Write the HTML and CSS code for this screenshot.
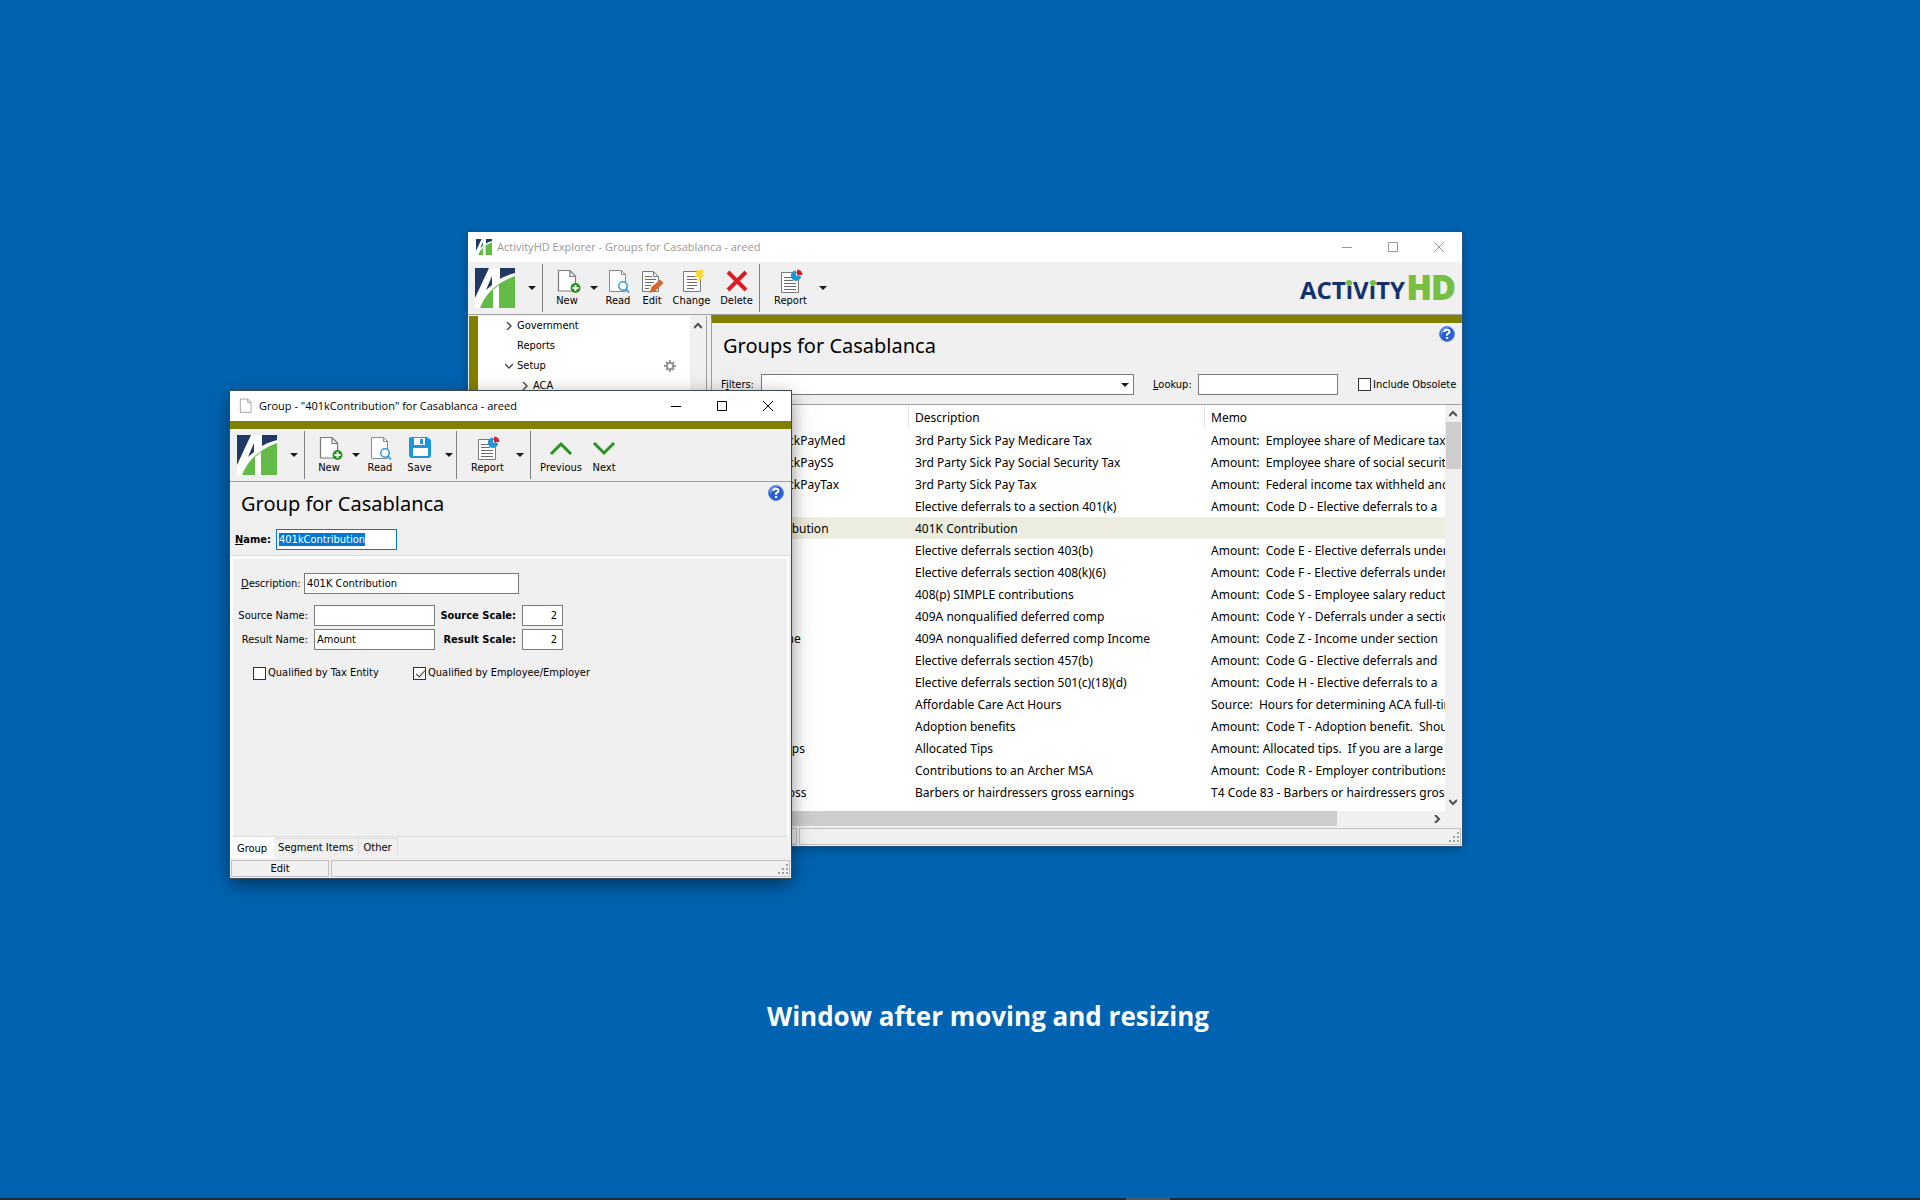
FILE: index.html
```html
<!DOCTYPE html>
<html lang="en">
<head>
  <meta charset="UTF-8">
  <meta name="viewport" content="width=device-width, initial-scale=1.0">
  <title>ActivityHD Explorer</title>
  <link rel="stylesheet" href="styles.css">
</head>
<body>
  <!-- Shared icons -->
  <svg class="sprite" aria-hidden="true">
    <symbol id="logo" viewBox="0 0 40 40">
      <clipPath id="logo-clip"><rect width="40" height="40" rx="4"/></clipPath>
      <g clip-path="url(#logo-clip)">
        <rect width="40" height="40" fill="#fff"/>
        <path d="M0 0H14L0 30Z" fill="#1f3864"/>
        <path d="M25 0H40V5Q32 7 25 11Z" fill="#1f3864"/>
        <path d="M17 8V17L11 22Z" fill="#1f3864"/>
        <path d="M5 40Q13 18 40 8V40Z" fill="#62bb46"/>
        <path d="M18 40V22L24 17V40Z" fill="#fff"/>
      </g>
    </symbol>
    <symbol id="doc" viewBox="0 0 24 24">
      <path d="M3.500 1.500h11l5 5v15h-16z M14.500 1.500v5h5" fill="#fff" stroke="#7b7b7b"/>
    </symbol>
    <symbol id="new" viewBox="0 0 24 24">
      <path d="M2 1.500h11l5.500 5.500v15h-17v-20.500z M13 1.500v6h5.500" fill="#fff" stroke="#7b7b7b" stroke-width="1.200"/>
      <circle cx="18.500" cy="19" r="5" fill="#26941f"/>
      <path d="M18.500 16v6M15.500 19h6" stroke="#fff" stroke-width="1.800"/>
    </symbol>
    <symbol id="read" viewBox="0 0 24 24">
      <path d="M3.500 1.500h12l4 4v17h-16z M15.500 1.500v4h4" fill="#fff" stroke="#8a8a8a"/>
      <circle cx="17" cy="17" r="4.200" fill="#fff" stroke="#2a9be0" stroke-width="1.500"/>
      <path d="M20 20l3 3.500" stroke="#2a9be0" stroke-width="1.800"/>
    </symbol>
    <symbol id="edit" viewBox="0 0 24 24">
      <path d="M2.500 2.500h11l5 5v15h-16z M13.500 2.500v5h5" fill="#fff" stroke="#7b7b7b"/>
      <path d="M5 7.500h7M5 10.500h11M5 13.500h9M5 16.500h6M5 19.500h4" stroke="#6b6b6b"/>
      <path d="M9.500 24l2-6 8.500-7.500 3.500 3.500-8 8z" fill="#d2692b"/>
    </symbol>
    <symbol id="change" viewBox="0 0 24 24">
      <path d="M3.500 2.500h17v20h-17z" fill="#fff" stroke="#7b7b7b"/>
      <path d="M7 7.500h8M7 10.500h10M7 13.500h10M7 16.500h10M7 19.500h7" stroke="#6b6b6b"/>
      <path d="M17 1h7l-2 5h3l-8 8 2-6h-4z" fill="#fdd835"/>
    </symbol>
    <symbol id="delete" viewBox="0 0 24 24">
      <path d="M3 3l18 18M21 3L3 21" stroke="#d81f27" stroke-width="4"/>
    </symbol>
    <symbol id="report" viewBox="0 0 24 24">
      <path d="M2.500 3.500h17v20h-17z" fill="#fff" stroke="#7b7b7b"/>
      <path d="M5 8.500h8M5 11.500h9M5 14.500h12M5 17.500h12M5 20.500h12" stroke="#6b6b6b"/>
      <path d="M17 6.500V1.500a5.200 5.200 0 1 0 5.200 5.500z" fill="#2196d6"/>
      <path d="M18 .500a6 6 0 0 1 5.500 5.500H18z" fill="#d81f27"/>
    </symbol>
    <symbol id="save" viewBox="0 0 24 24">
      <path d="M3 1h16l4 3v15a3 3 0 0 1-3 3H4a3 3 0 0 1-3-3V3a2 2 0 0 1 2-2z" fill="#1e96dc"/>
      <path d="M6 2h11v7H6zM5 12h15v8H5z" fill="#fff"/>
      <path d="M12 3h3v5h-3z" fill="#1e96dc"/>
    </symbol>
    <symbol id="up" viewBox="0 0 24 24">
      <path d="M2 18L12 8l10 10" fill="none" stroke="#26941f" stroke-width="3"/>
    </symbol>
    <symbol id="down" viewBox="0 0 24 24">
      <path d="M2 7l10 10L22 7" fill="none" stroke="#26941f" stroke-width="3"/>
    </symbol>
    <symbol id="caret" viewBox="0 0 8 4">
      <path d="M0 0h8L4 4z" fill="#1a1a1a"/>
    </symbol>
    <symbol id="chevron" viewBox="0 0 8 8">
      <path d="M2 0l4 4-4 4" fill="none" stroke="currentColor"/>
    </symbol>
    <symbol id="gear" viewBox="0 0 12 12">
      <circle cx="6" cy="6" r="3.200" fill="none" stroke="#949494" stroke-width="2"/>
      <path d="M6 0v2.500M6 9.500V12M0 6h2.500M9.500 6H12M2 2l1.500 1.500M8.500 8.500L10 10M2 10l1.500-1.500M8.500 3.500L10 2" stroke="#949494" stroke-width="1.800"/>
    </symbol>
    <symbol id="help" viewBox="0 0 16 16">
      <circle cx="8" cy="8" r="7.500" fill="#2a5fd0" stroke="#5a8fe0"/>
      <path d="M2 6a6.500 6.500 0 0 1 8-4.500Q4 4 2 10z" fill="#6f9fee"/>
      <path d="M5.500 6Q5.500 3.700 8 3.700T10.500 6Q10.500 7.200 8.100 8.200V9.800" fill="none" stroke="#fff" stroke-width="1.900"/>
      <path d="M7 11h2.200v2H7z" fill="#fff"/>
    </symbol>
    <symbol id="minimize" viewBox="0 0 12 12"><path d="M1 6.500h10" stroke="currentColor"/></symbol>
    <symbol id="maximize" viewBox="0 0 12 12"><path d="M1.500 1.500h9v9h-9z" fill="none" stroke="currentColor"/></symbol>
    <symbol id="close" viewBox="0 0 12 12"><path d="M1 1l10 10M11 1L1 11" stroke="currentColor"/></symbol>
    <symbol id="grip" viewBox="0 0 10 10">
      <path d="M8 0h2v2H8zM4 4h2v2H4zM8 4h2v2H8zM0 8h2v2H0zM4 8h2v2H4zM8 8h2v2H8z" fill="#a0a0a0"/>
    </symbol>
  </svg>

  <main class="desktop">
    <!-- Explorer window -->
    <section class="window explorer">
      <header class="titlebar">
        <svg class="title-icon"><use href="#logo"/></svg>
        <span class="title-text">ActivityHD Explorer - Groups for Casablanca - areed</span>
        <button class="title-button" aria-label="Minimize"><svg><use href="#minimize"/></svg></button>
        <button class="title-button" aria-label="Maximize"><svg><use href="#maximize"/></svg></button>
        <button class="title-button" aria-label="Close"><svg><use href="#close"/></svg></button>
      </header>

      <div class="toolbar">
        <button class="logo-button" aria-label="ActivityHD"><svg><use href="#logo"/></svg></button>
        <button class="drop logo-drop" aria-label="ActivityHD menu"><svg><use href="#caret"/></svg></button>
        <span class="separator"></span>
        <button class="tool new"><svg><use href="#new"/></svg>New</button>
        <button class="drop" aria-label="New options"><svg><use href="#caret"/></svg></button>
        <button class="tool narrow"><svg><use href="#read"/></svg>Read</button>
        <button class="tool narrow"><svg><use href="#edit"/></svg>Edit</button>
        <button class="tool"><svg><use href="#change"/></svg>Change</button>
        <button class="tool"><svg><use href="#delete"/></svg>Delete</button>
        <span class="separator"></span>
        <button class="tool report"><svg><use href="#report"/></svg>Report</button>
        <button class="drop report-drop" aria-label="Report options"><svg><use href="#caret"/></svg></button>
        <svg class="brand" viewBox="0 0 160 36" role="img" aria-label="ActivityHD">
          <text x="2" y="29" class="brand-name">ACTiViTY</text>
          <text x="109" y="29" class="brand-hd">HD</text>
          <circle cx="51" cy="13" r="3"/>
          <circle cx="75" cy="13" r="3"/>
        </svg>
      </div>

      <div class="explorer-body">
        <nav class="tree-pane">
          <ul class="tree">
            <li><svg><use href="#chevron"/></svg>Government</li>
            <li class="leaf">Reports</li>
            <li class="open"><svg><use href="#chevron"/></svg>Setup
              <button class="gear" aria-label="Setup options"><svg><use href="#gear"/></svg></button></li>
            <li class="child"><svg><use href="#chevron"/></svg>ACA</li>
          </ul>
          <div class="tree-scroll"><svg class="arrow-up"><use href="#chevron"/></svg></div>
        </nav>

        <div class="list-pane">
          <div class="list-head">
            <h1>Groups for Casablanca</h1>
            <button class="help" aria-label="Help"><svg><use href="#help"/></svg></button>
          </div>
          <div class="filters">
            <label for="filters">F<u>i</u>lters:</label>
            <span class="combo">
              <select id="filters"><option></option></select>
              <svg><use href="#caret"/></svg>
            </span>
            <label for="lookup" class="lookup-label"><u>L</u>ookup:</label>
            <input type="text" id="lookup">
            <label class="check obsolete"><input type="checkbox">Include Obsolete</label>
          </div>

          <div class="list">
            <div class="list-view">
              <table>
                <colgroup><col class="col-name"><col class="col-desc"><col></colgroup>
                <thead>
                  <tr><th></th><th>Description</th><th>Memo</th></tr>
                </thead>
                <tbody>
                  <tr><td>3rdPartySickPayMed</td><td>3rd Party Sick Pay Medicare Tax</td><td>Amount:  Employee share of Medicare tax</td></tr>
                  <tr><td>3rdPartySickPaySS</td><td>3rd Party Sick Pay Social Security Tax</td><td>Amount:  Employee share of social security</td></tr>
                  <tr><td>3rdPartySickPayTax</td><td>3rd Party Sick Pay Tax</td><td>Amount:  Federal income tax withheld and</td></tr>
                  <tr><td></td><td>Elective deferrals to a section 401(k)</td><td>Amount:  Code D - Elective deferrals to a</td></tr>
                  <tr class="selected"><td>401kContribution</td><td>401K Contribution</td><td></td></tr>
                  <tr><td></td><td>Elective deferrals section 403(b)</td><td>Amount:  Code E - Elective deferrals under</td></tr>
                  <tr><td></td><td>Elective deferrals section 408(k)(6)</td><td>Amount:  Code F - Elective deferrals under</td></tr>
                  <tr><td></td><td>408(p) SIMPLE contributions</td><td>Amount:  Code S - Employee salary reduction</td></tr>
                  <tr><td></td><td>409A nonqualified deferred comp</td><td>Amount:  Code Y - Deferrals under a section</td></tr>
                  <tr><td>409AIncome</td><td>409A nonqualified deferred comp Income</td><td>Amount:  Code Z - Income under section</td></tr>
                  <tr><td></td><td>Elective deferrals section 457(b)</td><td>Amount:  Code G - Elective deferrals and</td></tr>
                  <tr><td></td><td>Elective deferrals section 501(c)(18)(d)</td><td>Amount:  Code H - Elective deferrals to a</td></tr>
                  <tr><td></td><td>Affordable Care Act Hours</td><td>Source:  Hours for determining ACA full-time</td></tr>
                  <tr><td></td><td>Adoption benefits</td><td>Amount:  Code T - Adoption benefit.  Should</td></tr>
                  <tr><td>AllocatedTips</td><td>Allocated Tips</td><td>Amount: Allocated tips.  If you are a large</td></tr>
                  <tr><td></td><td>Contributions to an Archer MSA</td><td>Amount:  Code R - Employer contributions</td></tr>
                  <tr><td>BarbersGross</td><td>Barbers or hairdressers gross earnings</td><td>T4 Code 83 - Barbers or hairdressers gross</td></tr>
                </tbody>
              </table>
            </div>
            <div class="vscroll">
              <svg class="arrow-up"><use href="#chevron"/></svg>
              <span class="vthumb"></span>
              <svg class="arrow-down"><use href="#chevron"/></svg>
            </div>
          </div>
          <div class="hscroll">
            <span class="hthumb"></span>
            <svg><use href="#chevron"/></svg>
          </div>
        </div>
      </div>

      <footer class="statusbar">
        <span class="status-mode"></span>
        <span class="status-text"><svg><use href="#grip"/></svg></span>
      </footer>
    </section>

    <!-- Group window -->
    <section class="window group">
      <header class="titlebar">
        <svg class="title-icon"><use href="#doc"/></svg>
        <span class="title-text">Group - "401kContribution" for Casablanca - areed</span>
        <button class="title-button" aria-label="Minimize"><svg><use href="#minimize"/></svg></button>
        <button class="title-button" aria-label="Maximize"><svg><use href="#maximize"/></svg></button>
        <button class="title-button" aria-label="Close"><svg><use href="#close"/></svg></button>
      </header>

      <div class="toolbar">
        <button class="logo-button" aria-label="ActivityHD"><svg><use href="#logo"/></svg></button>
        <button class="drop logo-drop" aria-label="ActivityHD menu"><svg><use href="#caret"/></svg></button>
        <span class="separator"></span>
        <button class="tool new"><svg><use href="#new"/></svg>New</button>
        <button class="drop" aria-label="New options"><svg><use href="#caret"/></svg></button>
        <button class="tool narrow"><svg><use href="#read"/></svg>Read</button>
        <button class="tool"><svg><use href="#save"/></svg>Save</button>
        <button class="drop" aria-label="Save options"><svg><use href="#caret"/></svg></button>
        <span class="separator"></span>
        <button class="tool report"><svg><use href="#report"/></svg>Report</button>
        <button class="drop report-drop" aria-label="Report options"><svg><use href="#caret"/></svg></button>
        <span class="separator"></span>
        <button class="tool previous"><svg><use href="#up"/></svg>Previous</button>
        <button class="tool narrow"><svg><use href="#down"/></svg>Next</button>
      </div>

      <div class="group-head">
        <h1>Group for Casablanca</h1>
        <button class="help" aria-label="Help"><svg><use href="#help"/></svg></button>
      </div>
      <div class="name-row">
        <label for="name"><u>N</u>ame:</label>
        <input type="text" id="name" value="401kContribution">
      </div>

      <form class="tab-page">
        <div class="field-row">
          <label for="description"><u>D</u>escription:</label>
          <input type="text" id="description" class="wide" value="401K Contribution">
        </div>
        <div class="field-grid">
          <label for="source-name">Source Name:</label>
          <input type="text" id="source-name">
          <label for="source-scale" class="bold">Source Scale:</label>
          <input type="text" id="source-scale" class="scale" value="2">
          <label for="result-name">Result Name:</label>
          <input type="text" id="result-name" value="Amount">
          <label for="result-scale" class="bold">Result Scale:</label>
          <input type="text" id="result-scale" class="scale" value="2">
        </div>
        <div class="check-row">
          <label class="check"><input type="checkbox">Qualified by Tax Entity</label>
          <label class="check"><input type="checkbox" checked>Qualified by Employee/Employer</label>
        </div>
      </form>

      <div class="tabs">
        <button class="tab active">Group</button>
        <button class="tab">Segment Items</button>
        <button class="tab">Other</button>
      </div>
      <footer class="statusbar">
        <span class="status-mode">Edit</span>
        <span class="status-text"><svg><use href="#grip"/></svg></span>
      </footer>
    </section>

    <p class="caption">Window after moving and resizing</p>
    <div class="taskbar"><span></span></div>
  </main>

  <script>
    // Start with the group name selected, ready to be replaced
    const nameInput = document.getElementById('name');
    nameInput.focus();
    nameInput.select();
  </script>
</body>
</html>
```
FILE: styles.css
```css
* {
  box-sizing: border-box;
}

body {
  margin: 0;
  font-family: "DejaVu Sans Condensed", "Noto Sans", sans-serif;
  font-size: 11px;
  line-height: 16px;
  color: #000;
}

.sprite {
  display: none;
}

button,
input,
select {
  font: inherit;
  color: inherit;
  margin: 0;
}

button {
  background: none;
  border: none;
  padding: 0;
}

svg {
  display: block;
  flex-shrink: 0;
}

h1 {
  margin: 0;
  font-family: "Noto Sans", sans-serif;
  font-size: 20px;
  font-weight: normal;
  line-height: 28px;
}

.desktop {
  position: relative;
  min-height: 100vh;
  background: #0063b1;
  overflow: hidden;
}

.window {
  position: absolute;
  display: flex;
  flex-direction: column;
  background: #f0f0f0;
}

.explorer {
  left: 468px;
  top: 232px;
  width: 994px;
  height: 614px;
  box-shadow: 0 0 0 1px #1d5687, 0 2px 10px rgba(0, 0, 0, 0.35);
}

.group {
  left: 230px;
  top: 391px;
  width: 561px;
  height: 487px;
  box-shadow: 0 0 0 1px #3c4a56, 0 6px 18px rgba(0, 0, 0, 0.5);
}

/* Title bars */
.titlebar {
  display: flex;
  align-items: center;
  height: 30px;
  flex-shrink: 0;
  padding-left: 8px;
  background: #fff;
  font-family: "Open Sans", sans-serif;
  font-size: 11px;
}

.explorer .titlebar {
  color: #999;
}

.title-icon {
  width: 16px;
  height: 16px;
}

.title-text {
  flex: 1;
  margin-left: 5px;
  white-space: nowrap;
}

.title-button {
  display: flex;
  justify-content: center;
  width: 46px;
}

.title-button svg {
  width: 12px;
  height: 12px;
}

/* Toolbars */
.toolbar {
  display: flex;
  align-items: flex-start;
  flex-shrink: 0;
  height: 53px;
  padding: 2px 4px 0 7px;
  border-bottom: 1px solid #a0a0a0;
}

.group .toolbar {
  height: 61px;
  border-top: 8px solid #808000;
}

.logo-button {
  margin-top: 4px;
}

.logo-button svg {
  width: 40px;
  height: 40px;
}

.separator {
  width: 1px;
  height: 48px;
  margin-right: 4px;
  background: #808080;
}

.tool {
  display: flex;
  flex-direction: column;
  align-items: center;
  width: 45px;
  padding-top: 5px;
  white-space: nowrap;
}

.tool svg {
  width: 24px;
  height: 24px;
}

.tool.new {
  width: 40px;
}

.tool.new svg {
  margin-left: 4px;
}

.tool.narrow {
  width: 34px;
}

.tool.report {
  margin-left: 4px;
}

.tool.previous {
  width: 52px;
}

.drop {
  display: flex;
  justify-content: center;
  width: 14px;
  padding-top: 22px;
}

.drop svg {
  width: 8px;
  height: 4px;
}

.logo-drop {
  width: 27px;
  padding-left: 7px;
}

.report-drop {
  width: 20px;
}

.brand {
  width: 160px;
  height: 36px;
  margin: 6px 0 0 auto;
  fill: #78be43;
  font-family: "Open Sans", sans-serif;
  font-weight: bold;
  overflow: visible;
}

.brand-name {
  font-size: 24px;
  fill: #13316b;
}

.brand-hd {
  font-size: 32px;
  stroke: #78be43;
  stroke-width: 2;
}

/* Explorer tree */
.explorer-body {
  display: flex;
  flex: 1;
  min-height: 0;
}

.tree-pane {
  display: flex;
  width: 238px;
  margin: 1px 4px 0 1px;
  border-left: 9px solid #808000;
  border-right: 1px solid #a0a0a0;
  background: #fff;
}

.tree {
  flex: 1;
  margin: 0;
  padding: 0;
  list-style: none;
}

.tree li {
  display: flex;
  align-items: center;
  gap: 4px;
  height: 20px;
  padding-left: 27px;
}

.tree svg {
  width: 8px;
  height: 8px;
  color: #444;
  stroke-width: 1.4;
}

.tree .leaf {
  padding-left: 39px;
}

.tree .child {
  padding-left: 43px;
}

.open > svg {
  transform: rotate(90deg);
}

.tree .gear {
  margin: 0 14px 0 auto;
}

.tree .gear svg {
  width: 12px;
  height: 12px;
}

.tree-scroll {
  width: 16px;
  padding-top: 6px;
  background: #f0f0f0;
}

.tree-scroll svg {
  margin: 0 auto;
}

.arrow-up,
.arrow-down,
.hscroll svg {
  width: 8px;
  height: 8px;
  color: #505050;
  stroke-width: 2;
}

.arrow-up {
  transform: rotate(-90deg);
}

.arrow-down {
  transform: rotate(90deg);
}

/* Explorer list */
.list-pane {
  display: flex;
  flex-direction: column;
  flex: 1;
  min-width: 0;
  border-top: 8px solid #808000;
  border-left: 1px solid #a0a0a0;
}

.list-head,
.group-head {
  display: flex;
  justify-content: space-between;
  padding: 3px 7px 0 11px;
}

.list-head h1 {
  margin-top: 6px;
}

.group-head h1 {
  margin-top: 5px;
}

.help {
  align-self: flex-start;
}

.help svg {
  width: 16px;
  height: 16px;
}

.filters {
  display: flex;
  align-items: center;
  margin-top: 14px;
  padding: 0 7px 9px 9px;
}

.filters label {
  width: 40px;
  white-space: nowrap;
}

input[type="text"],
select {
  height: 21px;
  padding: 0 2px;
  border: 1px solid #7a7a7a;
  border-radius: 0;
  background: #fff;
  outline: none;
}

.combo {
  position: relative;
  flex: 1;
}

.combo select {
  display: block;
  width: 100%;
  appearance: none;
}

.combo svg {
  position: absolute;
  right: 5px;
  top: 9px;
  width: 8px;
  height: 4px;
}

.filters .lookup-label {
  width: 45px;
  margin-left: 19px;
}

#lookup {
  width: 140px;
  margin-right: 20px;
}

.check {
  display: flex;
  align-items: center;
  gap: 2px;
  white-space: nowrap;
}

.filters .obsolete {
  width: 97px;
}

.check input {
  appearance: none;
  width: 13px;
  height: 13px;
  flex-shrink: 0;
  border: 1px solid #333;
  background: #fff;
}

.check input:checked::after {
  content: "";
  display: block;
  width: 4px;
  height: 8px;
  margin: 0 0 0 4px;
  border: solid #333;
  border-width: 0 1px 1px 0;
  transform: rotate(42deg);
}

.list {
  display: flex;
  flex: 1;
  min-height: 0;
  border-top: 1px solid #a0a0a0;
}

.list-view {
  flex: 1;
  overflow: hidden;
  background: #fff;
}

table {
  width: 100%;
  table-layout: fixed;
  border-collapse: separate;
  border-spacing: 0;
  font-family: "Noto Sans", sans-serif;
  font-size: 12px;
}

.col-name {
  width: 197px;
}

.col-desc {
  width: 296px;
}

th,
td {
  height: 22px;
  padding: 1px 0 0 6px;
  overflow: hidden;
  text-align: left;
  font-weight: normal;
  white-space: pre;
}

td:first-child {
  padding-left: 18px;
}

th {
  height: 24px;
  border-right: 1px solid #e5e5e5;
}

th:last-child {
  border-right: none;
}

.selected {
  background: #ecedde;
}

.vscroll {
  display: flex;
  flex-direction: column;
  align-items: center;
  width: 17px;
  padding: 5px 1px 5px 0;
}

.vthumb {
  width: 15px;
  height: 47px;
  margin: 4px 0 auto;
  background: #cdcdcd;
}

.hscroll {
  display: flex;
  align-items: center;
  height: 15px;
  padding-right: 21px;
}

.hthumb {
  width: 625px;
  height: 15px;
  margin-right: auto;
  background: #cdcdcd;
}

/* Status bars */
.statusbar {
  display: flex;
  gap: 2px;
  flex-shrink: 0;
  padding: 2px 1px 1px;
}

.statusbar span {
  height: 17px;
  border: 1px solid #c0c0c0;
  line-height: 15px;
  text-align: center;
}

.status-mode {
  width: 98px;
}

.explorer .status-mode {
  width: 328px;
}

.status-text {
  display: flex;
  justify-content: flex-end;
  align-items: flex-end;
  flex: 1;
  padding: 0 1px 2px;
}

.status-text svg {
  width: 10px;
  height: 10px;
}

/* Group form */
.name-row {
  display: flex;
  align-items: center;
  gap: 5px;
  padding: 11px 5px 6px;
}

.name-row label {
  width: 36px;
  font-weight: bold;
  white-space: nowrap;
}

#name {
  width: 121px;
  border-color: #0078d7;
}

#name::selection {
  background: #0078d7;
  color: #fff;
}

.tab-page {
  flex: 1;
  margin-right: 2px;
  padding: 14px 8px;
  border: solid #fff;
  border-width: 3px 2px 0 3px;
  box-shadow: inset 0 -1px #dcdcdc, 0 -1px #dcdcdc;
}

.field-row {
  display: flex;
  align-items: center;
}

.field-row label {
  width: 63px;
}

.field-row .wide {
  width: 215px;
}

.field-grid {
  display: grid;
  grid-template-columns: 67px 121px 75px 41px;
  column-gap: 6px;
  row-gap: 3px;
  align-items: center;
  margin-top: 11px;
  text-align: right;
  white-space: nowrap;
}

.field-grid label {
  justify-self: end;
}

.field-grid input {
  text-align: left;
}

.field-grid .bold {
  font-weight: bold;
}

.field-grid .scale {
  padding-right: 5px;
  text-align: right;
}

.check-row {
  display: grid;
  grid-template-columns: 160px 1fr;
  margin-top: 15px;
  padding-left: 12px;
}

.tabs {
  display: flex;
  align-items: flex-start;
  height: 21px;
  flex-shrink: 0;
}

.tab {
  height: 18px;
  margin-top: 1px;
  padding: 0 5px 0 4px;
  border: solid #dcdcdc;
  border-width: 1px 1px 0 0;
}

.tab.active {
  height: 21px;
  margin-top: 0;
  padding: 3px 7px 0;
  border-width: 0;
  background: #fff;
}

/* Caption and taskbar */
.caption {
  position: absolute;
  left: 767px;
  top: 998px;
  margin: 0;
  color: #fff;
  font-family: "Open Sans", sans-serif;
  font-size: 26px;
  font-weight: bold;
  line-height: 36px;
  white-space: nowrap;
}

.taskbar {
  position: absolute;
  right: 0;
  bottom: 0;
  left: 0;
  height: 2px;
  background: #1b2c3a;
}

.taskbar span {
  display: block;
  width: 44px;
  height: 2px;
  margin-left: 1126px;
  background: #4b5b69;
}
```
